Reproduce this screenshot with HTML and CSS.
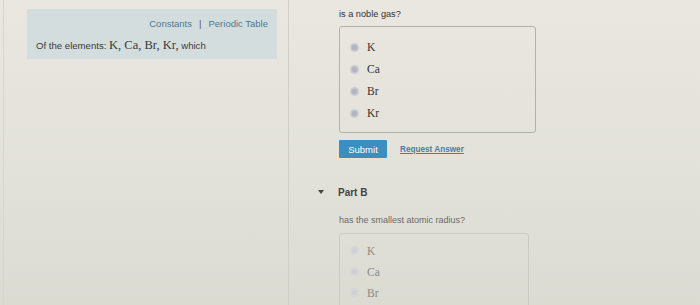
FILE: index.html
```html
<!DOCTYPE html>
<html>
<head>
<meta charset="utf-8">
<link rel="stylesheet" href="styles.css">
</head>
<body>
<div class="page">
  <aside class="left">
    <div class="info">
      <div class="links"><span class="lnk">Constants</span><span class="sep">|</span><span class="lnk">Periodic Table</span></div>
      <p class="stem">Of the elements: <span class="chem">K, Ca, Br, Kr,</span> which</p>
    </div>
  </aside>
  <main class="right">
    <p class="q">is a noble gas?</p>
    <div class="choices">
      <label class="opt"><span class="radio"></span><span class="chem">K</span></label>
      <label class="opt"><span class="radio"></span><span class="chem">Ca</span></label>
      <label class="opt"><span class="radio"></span><span class="chem">Br</span></label>
      <label class="opt"><span class="radio"></span><span class="chem">Kr</span></label>
    </div>
    <div class="actions">
      <button class="submit">Submit</button>
      <span class="req">Request Answer</span>
    </div>
    <div class="partb">
      <span class="tri"></span><span class="ptitle">Part B</span>
    </div>
    <p class="q2">has the smallest atomic radius?</p>
    <div class="choices faded">
      <label class="opt"><span class="radio"></span><span class="chem">K</span></label>
      <label class="opt"><span class="radio"></span><span class="chem">Ca</span></label>
      <label class="opt"><span class="radio"></span><span class="chem">Br</span></label>
    </div>
  </main>
</div>
</body>
</html>
```

FILE: styles.css
```css
html, body {
  margin: 0;
  padding: 0;
  height: 100%;
  overflow: hidden;
}
body {
  background: linear-gradient(180deg, #e9e7e0 0%, #e3e2da 55%, #dbdbd2 100%);
  font-family: "Liberation Sans", Arial, sans-serif;
  color: #444;
}
.page {
  display: flex;
  height: 305px;
}
.left {
  width: 286px;
  flex: none;
  border-left: 1px solid #d6d5ce;
  margin-left: 3px;
  border-right: 1px solid #cfcfc8;
  padding: 9px 11px 0 23px;
  box-sizing: border-box;
}
.info {
  background: #d4dddd;
  padding: 9px 9px 6px 9px;
  height: 50px;
  box-sizing: border-box;
}
.links {
  text-align: right;
  font-size: 9.5px;
  color: #4d7a91;
  line-height: 12px;
}
.sep {
  color: #555;
  margin: 0 7px;
}
.stem {
  margin: 9px 0 0;
  font-size: 9.6px;
  line-height: 12px;
  color: #3a3a3a;
}
.stem .chem {
  font-size: 12.5px;
}
.chem {
  font-family: "Liberation Serif", "Times New Roman", serif;
  font-size: 11.5px;
}
.right {
  padding-left: 50px;
  flex: 1;
}
.q {
  margin: 8px 0 0;
  font-size: 9.2px;
  line-height: 12px;
  color: #333;
}
.choices {
  margin-top: 6px;
  width: 197px;
  box-sizing: border-box;
  border: 1px solid #b2b2ad;
  border-radius: 3px;
  padding: 9px 0 8px 10px;
  display: flex;
  flex-direction: column;
}
.opt {
  display: flex;
  align-items: center;
  height: 22px;
  gap: 8px;
  color: #333;
}
.radio {
  width: 9px;
  height: 9px;
  border-radius: 50%;
  background: radial-gradient(circle at 50% 50%, #b3b6c2 0 2.5px, #c8cad2 3.2px, #e0e1e4 100%);
  border: 0.5px solid #c6c7cc;
  box-sizing: border-box;
}
.actions {
  display: flex;
  align-items: center;
  margin-top: 7px;
  gap: 13px;
}
.submit {
  width: 48px;
  height: 18px;
  border: none;
  border-radius: 1px;
  background: #3b8ec0;
  color: #fff;
  font-family: "Liberation Sans", Arial, sans-serif;
  font-size: 9.5px;
  padding: 0;
}
.req {
  color: #4a7ca6;
  font-weight: bold;
  font-size: 8.2px;
  text-decoration: underline;
}
.partb {
  display: flex;
  align-items: center;
  margin-top: 27px;
  margin-left: -21px;
  height: 14px;
}
.tri {
  width: 0;
  height: 0;
  border-left: 3.5px solid transparent;
  border-right: 3.5px solid transparent;
  border-top: 4px solid #444;
  margin-right: 14px;
}
.ptitle {
  font-size: 10px;
  font-weight: 600;
  color: #444;
}
.q2 {
  margin: 15px 0 0;
  font-size: 9px;
  line-height: 12px;
  color: #6a6a68;
}
.faded {
  margin-top: 7px;
  width: 190px;
  border-color: #cbcbc4;
  padding-top: 6px;
}
.faded .opt {
  height: 21px;
  color: #8a8a86;
}
.faded .radio {
  background: radial-gradient(circle at 50% 50%, #cfd0d4 0 2.5px, #d8d9dc 3px, #e4e4e4 100%);
  border-color: #d4d4d4;
}
```
